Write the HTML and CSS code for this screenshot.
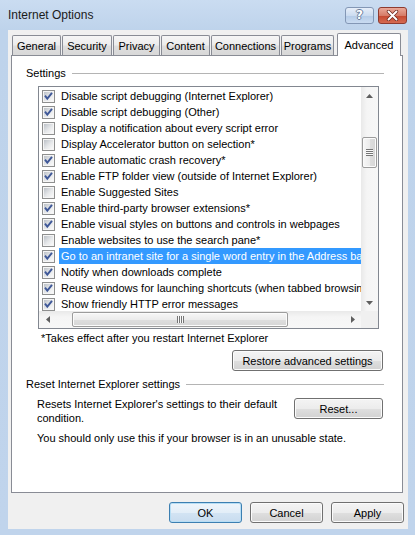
FILE: index.html
```html
<!DOCTYPE html>
<html>
<head>
<meta charset="utf-8">
<title>Internet Options</title>
<link rel="stylesheet" href="styles.css">
</head>
<body>
<div class="window">
  <div class="titlebar">
    <span class="title">Internet Options</span>
    <div class="caption">
      <div class="cbtn help">?</div>
      <div class="cbtn close">
        <svg width="13" height="11" viewBox="0 0 13 11"><path d="M2.5 1.5 L10.5 9.5 M10.5 1.5 L2.5 9.5" stroke="#6a261c" stroke-width="3.4" stroke-linecap="round" fill="none"/><path d="M2.5 1.5 L10.5 9.5 M10.5 1.5 L2.5 9.5" stroke="#ffffff" stroke-width="2" stroke-linecap="round" fill="none"/></svg>
      </div>
    </div>
  </div>
  <div class="client">
    <div class="tabs">
      <div class="tab t-general">General</div>
      <div class="tab t-security">Security</div>
      <div class="tab t-privacy">Privacy</div>
      <div class="tab t-content">Content</div>
      <div class="tab t-connections">Connections</div>
      <div class="tab t-programs">Programs</div>
      <div class="tab selected t-advanced">Advanced</div>
    </div>
    <div class="panel">
      <div class="group-head"><span>Settings</span><i class="rule"></i></div>
      <div class="listbox">
        <div class="items">
          <div class="row"><span class="cb"><svg viewBox="0 0 9 9"><path d="M1 3.6 L3.3 6.6 L8 0.8" stroke="#3f5898" stroke-width="1.9" fill="none"/></svg></span><span class="lbl">Disable script debugging (Internet Explorer)</span></div>
          <div class="row"><span class="cb"><svg viewBox="0 0 9 9"><path d="M1 3.6 L3.3 6.6 L8 0.8" stroke="#3f5898" stroke-width="1.9" fill="none"/></svg></span><span class="lbl">Disable script debugging (Other)</span></div>
          <div class="row"><span class="cb"></span><span class="lbl">Display a notification about every script error</span></div>
          <div class="row"><span class="cb"></span><span class="lbl">Display Accelerator button on selection*</span></div>
          <div class="row"><span class="cb"><svg viewBox="0 0 9 9"><path d="M1 3.6 L3.3 6.6 L8 0.8" stroke="#3f5898" stroke-width="1.9" fill="none"/></svg></span><span class="lbl">Enable automatic crash recovery*</span></div>
          <div class="row"><span class="cb"><svg viewBox="0 0 9 9"><path d="M1 3.6 L3.3 6.6 L8 0.8" stroke="#3f5898" stroke-width="1.9" fill="none"/></svg></span><span class="lbl">Enable FTP folder view (outside of Internet Explorer)</span></div>
          <div class="row"><span class="cb"></span><span class="lbl">Enable Suggested Sites</span></div>
          <div class="row"><span class="cb"><svg viewBox="0 0 9 9"><path d="M1 3.6 L3.3 6.6 L8 0.8" stroke="#3f5898" stroke-width="1.9" fill="none"/></svg></span><span class="lbl">Enable third-party browser extensions*</span></div>
          <div class="row"><span class="cb"><svg viewBox="0 0 9 9"><path d="M1 3.6 L3.3 6.6 L8 0.8" stroke="#3f5898" stroke-width="1.9" fill="none"/></svg></span><span class="lbl">Enable visual styles on buttons and controls in webpages</span></div>
          <div class="row"><span class="cb"></span><span class="lbl">Enable websites to use the search pane*</span></div>
          <div class="row"><span class="cb"><svg viewBox="0 0 9 9"><path d="M1 3.6 L3.3 6.6 L8 0.8" stroke="#3f5898" stroke-width="1.9" fill="none"/></svg></span><span class="lbl sel">Go to an intranet site for a single word entry in the Address bar</span></div>
          <div class="row"><span class="cb"><svg viewBox="0 0 9 9"><path d="M1 3.6 L3.3 6.6 L8 0.8" stroke="#3f5898" stroke-width="1.9" fill="none"/></svg></span><span class="lbl">Notify when downloads complete</span></div>
          <div class="row"><span class="cb"><svg viewBox="0 0 9 9"><path d="M1 3.6 L3.3 6.6 L8 0.8" stroke="#3f5898" stroke-width="1.9" fill="none"/></svg></span><span class="lbl">Reuse windows for launching shortcuts (when tabbed browsing is off)</span></div>
          <div class="row"><span class="cb"><svg viewBox="0 0 9 9"><path d="M1 3.6 L3.3 6.6 L8 0.8" stroke="#3f5898" stroke-width="1.9" fill="none"/></svg></span><span class="lbl">Show friendly HTTP error messages</span></div>
        </div>
        <div class="vscroll">
          <div class="sb-btn"><svg width="7" height="4" viewBox="0 0 7 4"><path d="M0 4 L3.5 0 L7 4Z" fill="#5e5e5e"/></svg></div>
          <div class="vtrack"><div class="vthumb"><i class="grip-h"></i></div></div>
          <div class="sb-btn"><svg width="7" height="4" viewBox="0 0 7 4"><path d="M0 0 L3.5 4 L7 0Z" fill="#5e5e5e"/></svg></div>
        </div>
        <div class="hscroll">
          <div class="sb-btn"><svg width="4" height="7" viewBox="0 0 4 7"><path d="M4 0 L0 3.5 L4 7Z" fill="#5e5e5e"/></svg></div>
          <div class="htrack"><div class="hthumb"><i class="grip-v"></i></div></div>
          <div class="sb-btn"><svg width="4" height="7" viewBox="0 0 4 7"><path d="M0 0 L4 3.5 L0 7Z" fill="#5e5e5e"/></svg></div>
        </div>
        <div class="corner"></div>
      </div>
      <div class="note">*Takes effect after you restart Internet Explorer</div>
      <div class="btn restore">Restore advanced settings</div>
      <div class="group-head reset-head"><span>Reset Internet Explorer settings</span><i class="rule"></i></div>
      <div class="reset-row">
        <div class="reset-text">Resets Internet Explorer's settings to their default<br>condition.</div>
        <div class="btn reset">Reset...</div>
      </div>
      <div class="warn">You should only use this if your browser is in an unusable state.</div>
    </div>
    <div class="dlg-btns">
      <div class="btn dlg default">OK</div>
      <div class="btn dlg">Cancel</div>
      <div class="btn dlg">Apply</div>
    </div>
  </div>
</div>
</body>
</html>
```
FILE: styles.css
```css
* { box-sizing: border-box; }
html, body { margin: 0; padding: 0; }
body {
  width: 415px;
  height: 535px;
  overflow: hidden;
  font-family: "Liberation Sans", Arial, sans-serif;
  font-size: 11px;
  color: #000;
  background: #bfd3ea;
}
.window {
  width: 415px;
  height: 535px;
  display: flex;
  flex-direction: column;
  background: linear-gradient(#cadcf1 0, #bed3eb 30px, #c0d4ec 100%);
}
.titlebar {
  height: 30px;
  flex: none;
  display: flex;
  align-items: center;
  padding-left: 8px;
}
.title { flex: 1; font-size: 12px; color: #1a1a1a; }
.caption { display: flex; gap: 4px; margin-right: 8px; }
.cbtn {
  width: 29px;
  height: 17px;
  border-radius: 3px;
  display: flex;
  align-items: center;
  justify-content: center;
}
.help {
  border: 1px solid #8397b5;
  background: linear-gradient(#e6eef9 0%, #ccdcf0 50%, #b4cbe7 51%, #c9dbf1 100%);
  color: #ffffff;
  font-family: "DejaVu Sans", sans-serif;
  font-weight: bold;
  font-size: 12px;
  text-shadow: -1px 0 #6b7f9c, 1px 0 #6b7f9c, 0 -1px #6b7f9c, 0 1px #6b7f9c;
}
.close {
  border: 1px solid #8e3b30;
  background: linear-gradient(#eaa899 0%, #d67c68 50%, #c5472f 51%, #d56b52 100%);
}
.client {
  margin: 0 7px 0 8px;
  height: 499px;
  flex: none;
  background: #f0f0f0;
  padding-top: 3px;
}
.tabs {
  display: flex;
  align-items: flex-end;
  height: 22px;
  padding-left: 4px;
}
.tab {
  height: 20px;
  margin-right: 1px;
  border: 1px solid #898c95;
  border-bottom: none;
  border-radius: 2px 2px 0 0;
  background: linear-gradient(#f6f6f6 0%, #ececec 45%, #dedede 55%, #d8d8d8 100%);
  display: flex;
  align-items: center;
  justify-content: center;
  white-space: nowrap;
}
.t-general { width: 49px; }
.t-security { width: 50px; }
.t-privacy { width: 47px; }
.t-content { width: 49px; }
.t-connections { width: 69px; }
.t-programs { width: 53px; margin-right: 3px; }
.t-advanced { width: 64px; }
.tab.selected {
  height: 23px;
  margin-bottom: -1px;
  background: #ffffff;
  position: relative;
  z-index: 1;
  padding-bottom: 1px;
}
.panel {
  margin-left: 3px;
  width: 392px;
  height: 438px;
  background: #ffffff;
  border: 1px solid #898c95;
  display: flex;
  flex-direction: column;
}
.group-head {
  display: flex;
  align-items: center;
  height: 14px;
  margin-top: 10px;
  padding-left: 14px;
  margin-right: 18px;
  white-space: nowrap;
}
.rule {
  flex: 1;
  height: 1px;
  margin-left: 6px;
  background: #b4b4b4;
}
.listbox {
  margin-top: 6px;
  margin-left: 26px;
  width: 341px;
  height: 243px;
  flex: none;
  border: 1px solid #828790;
  display: grid;
  grid-template-columns: 322px 17px;
  grid-template-rows: 224px 17px;
}
.items {
  overflow: hidden;
  padding-top: 1px;
}
.row {
  height: 16px;
  display: flex;
  align-items: center;
  padding-left: 3px;
}
.cb {
  flex: none;
  width: 13px;
  height: 13px;
  padding: 1px;
  border: 1px solid #8e8f8f;
  background: linear-gradient(135deg, #bcc1c8 0%, #e6e8ea 55%, #fafafa 100%) content-box, #f5f5f5;
  display: block;
}
.cb svg { display: block; width: 9px; height: 9px; overflow: visible; }
.lbl {
  flex: 1 0 auto;
  margin-left: 4px;
  padding-left: 2px;
  height: 16px;
  line-height: 16px;
  white-space: nowrap;
}
.lbl.sel { background: #3399ff; color: #ffffff; }
.vscroll {
  display: flex;
  flex-direction: column;
  background: linear-gradient(90deg, #e9e9e9 0%, #f5f5f5 35%, #f7f7f7 100%);
}
.sb-btn {
  flex: none;
  width: 17px;
  height: 17px;
  display: flex;
  align-items: center;
  justify-content: center;
}
.vtrack { flex: 1; padding: 0 1px; }
.vthumb {
  margin-top: 33px;
  height: 31px;
  border: 1px solid #9c9c9c;
  border-radius: 2px;
  background: linear-gradient(90deg, #f7f7f7 0%, #ececec 50%, #dedede 51%, #d6d6d6 100%);
  box-shadow: inset 0 0 0 1px #fbfbfb;
  display: flex;
  align-items: center;
  justify-content: center;
}
.grip-h {
  width: 7px;
  height: 7px;
  background: repeating-linear-gradient(#757575 0 1px, #fafafa 1px 2px);
}
.hscroll {
  display: flex;
  background: linear-gradient(#e9e9e9 0%, #f5f5f5 35%, #f7f7f7 100%);
}
.htrack { flex: 1; padding: 1px 0; }
.hthumb {
  margin-left: 16px;
  width: 216px;
  height: 15px;
  border: 1px solid #9c9c9c;
  border-radius: 2px;
  background: linear-gradient(#f7f7f7 0%, #ececec 50%, #dedede 51%, #d6d6d6 100%);
  box-shadow: inset 0 0 0 1px #fbfbfb;
  display: flex;
  align-items: center;
  justify-content: center;
}
.grip-v {
  width: 7px;
  height: 7px;
  background: repeating-linear-gradient(90deg, #757575 0 1px, #fafafa 1px 2px);
}
.corner { background: #f0f0f0; }
.note {
  margin-top: 2px;
  margin-left: 29px;
  line-height: 14px;
  white-space: nowrap;
}
.btn {
  height: 21px;
  border: 1px solid #707070;
  border-radius: 3px;
  background: linear-gradient(#f4f4f4 0%, #ececec 50%, #dfdfdf 51%, #d2d2d2 100%);
  box-shadow: inset 0 0 0 1px #fbfbfb;
  display: flex;
  align-items: center;
  justify-content: center;
  white-space: nowrap;
  flex: none;
}
.restore {
  margin-top: 5px;
  margin-left: auto;
  margin-right: 19px;
  width: 151px;
}
.reset-head { margin-top: 6px; }
.reset-row {
  display: flex;
  margin-top: 6px;
}
.reset-text {
  margin-left: 25px;
  line-height: 14px;
  white-space: nowrap;
}
.reset {
  margin-top: 1px;
  margin-left: auto;
  margin-right: 19px;
  width: 89px;
}
.warn {
  margin-top: 6px;
  margin-left: 25px;
  line-height: 14px;
  white-space: nowrap;
}
.dlg-btns {
  display: flex;
  justify-content: flex-end;
  gap: 8px;
  margin-top: 9px;
  padding-right: 4px;
}
.dlg { width: 73px; }
.dlg.default {
  border-color: #3c7fb1;
  box-shadow: inset 0 0 0 1px #b7def5;
  background: linear-gradient(#eef5fb 0%, #e3eef8 50%, #d3e4f3 51%, #c8dcef 100%);
}
```
